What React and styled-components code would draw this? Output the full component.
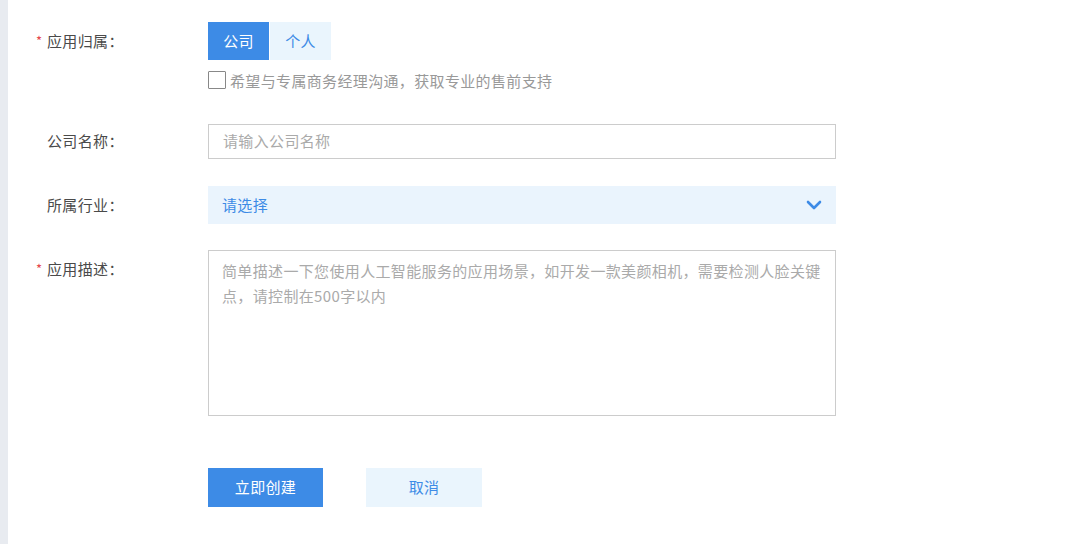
import React from 'react';
import styled, { createGlobalStyle } from 'styled-components';

const Global = createGlobalStyle`
  html, body {
    margin: 0;
    padding: 0;
    background: #fff;
    font-family: "Noto Sans CJK SC", "Liberation Sans", sans-serif;
  }
  * { box-sizing: border-box; }
`;

const Page = styled.div`
  display: flex;
  width: 1080px;
  height: 544px;
  overflow: hidden;
  letter-spacing: 0.35px;
`;

const Strip = styled.div`
  width: 8px;
  background: #e8ebf0;
`;

const Form = styled.div`
  flex: 1;
  display: flex;
  flex-direction: column;
  padding-top: 22px;
`;

const Row = styled.div`
  display: grid;
  grid-template-columns: 200px 628px;
  align-items: start;
  margin-top: ${(p) => p.$top || 0}px;
`;

const Label = styled.div`
  display: flex;
  align-items: center;
  height: ${(p) => p.$h}px;
  padding-left: 28px;
  padding-bottom: 2px;
  font-size: 15px;
  color: #4a4a4a;
`;

const Star = styled.span`
  width: 11px;
  color: #e5484d;
  font-size: 13px;
`;

const Control = styled.div`
  display: flex;
  flex-direction: column;
`;

const Toggle = styled.div`
  display: flex;
  gap: 1px;
`;

const ToggleBtn = styled.button`
  width: 61px;
  height: 38px;
  border: none;
  padding: 0 0 2px;
  font-family: inherit;
  letter-spacing: inherit;
  font-size: 15px;
  background: ${(p) => (p.$active ? '#3d8be6' : '#eaf5fd')};
  color: ${(p) => (p.$active ? '#fff' : '#3d8be6')};
`;

const CheckLine = styled.label`
  display: flex;
  align-items: center;
  gap: 4px;
  margin-top: 11px;
  font-size: 15px;
  color: #999;
  height: 18px;
`;

const Box = styled.span`
  width: 18px;
  height: 18px;
  border: 1.5px solid #888;
  border-radius: 1px;
`;

const Input = styled.div`
  height: 35px;
  border: 1px solid #ccc;
  display: flex;
  align-items: center;
  padding: 0 0 2px 14px;
  font-size: 15px;
  color: #aaa;
`;

const Select = styled.div`
  height: 38px;
  background: #eaf4fd;
  display: flex;
  align-items: center;
  justify-content: space-between;
  padding: 0 14px 1px;
  font-size: 15px;
  color: #3d8be6;
`;

const TextArea = styled.div`
  height: 166px;
  border: 1px solid #ccc;
  padding: 7px 13px;
  font-size: 15px;
  line-height: 25px;
  color: #aaa;
`;

const Actions = styled.div`
  display: flex;
  gap: 43px;
  margin-top: 52px;
  padding-left: 200px;
`;

const Btn = styled.button`
  width: ${(p) => (p.$primary ? 115 : 116)}px;
  height: 39px;
  border: none;
  padding: 0 0 2px;
  font-family: inherit;
  letter-spacing: inherit;
  font-size: 15px;
  background: ${(p) => (p.$primary ? '#3d8be6' : '#eaf5fd')};
  color: ${(p) => (p.$primary ? '#fff' : '#3d8be6')};
`;

const Chevron = () => (
  <svg width="16" height="10" viewBox="0 0 16 10">
    <path d="M2 2 L8 8 L14 2" fill="none" stroke="#3d8be6" strokeWidth="2.6" strokeLinecap="round" strokeLinejoin="round" />
  </svg>
);

export default function App() {
  return (
    <Page>
      <Global />
      <Strip />
      <Form>
        <Row>
          <Label $h={38}><Star>*</Star>应用归属：</Label>
          <Control>
            <Toggle>
              <ToggleBtn $active>公司</ToggleBtn>
              <ToggleBtn>个人</ToggleBtn>
            </Toggle>
            <CheckLine><Box />希望与专属商务经理沟通，获取专业的售前支持</CheckLine>
          </Control>
        </Row>
        <Row $top={35}>
          <Label $h={35}><Star />公司名称：</Label>
          <Input>请输入公司名称</Input>
        </Row>
        <Row $top={27}>
          <Label $h={38}><Star />所属行业：</Label>
          <Select>请选择<Chevron /></Select>
        </Row>
        <Row $top={26}>
          <Label $h={38}><Star>*</Star>应用描述：</Label>
          <TextArea>简单描述一下您使用人工智能服务的应用场景，如开发一款美颜相机，需要检测人脸关键点，请控制在500字以内</TextArea>
        </Row>
        <Actions>
          <Btn $primary>立即创建</Btn>
          <Btn>取消</Btn>
        </Actions>
      </Form>
    </Page>
  );
}
